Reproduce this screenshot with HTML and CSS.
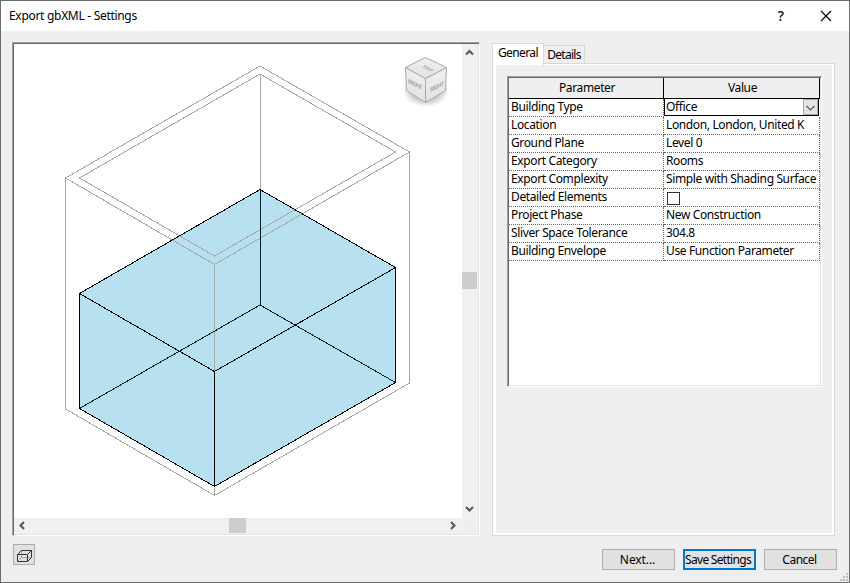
FILE: index.html
```
<!DOCTYPE html>
<html lang="en">
<head>
    <meta charset="UTF-8">
    <title>Export gbXML - Settings</title>
    <link rel="stylesheet" href="styles.css">
</head>
<body>
    <div class="window">
        <header class="titlebar">
            <span class="title">Export gbXML - Settings</span>
            <span class="help">?</span>
            <svg class="close" width="12" height="12" viewBox="0 0 12 12"><path d="M1 1L11 11M11 1L1 11" stroke="#000" stroke-width="1.100" fill="none"/></svg>
        </header>

        <main class="content">
            <section class="viewport">
                <svg class="model" width="448" height="474" viewBox="14 44 448 474">
                    <defs>
                        <linearGradient id="face" x1="0" y1="0" x2="0" y2="1">
                            <stop offset="0" stop-color="#f0f0f0"/>
                            <stop offset="1" stop-color="#e2e2e2"/>
                        </linearGradient>
                        <radialGradient id="shadow">
                            <stop offset="0.5" stop-color="#bbb"/>
                            <stop offset="1" stop-color="#fff"/>
                        </radialGradient>
                    </defs>
                    <!-- room volume -->
                    <path d="M260.500 189.500L395.500 267.500V382.500L214.500 486.500L79.500 408.500V293.500Z" fill="#b7e1f1"/>
                    <g class="walls">
                        <path d="M260 66L409.500 152L214.500 264.500L65.500 178Z"/>
                        <path d="M260 74L395.500 152L214.500 256L79.500 178Z"/>
                        <path d="M65.500 178V409L214.500 495.500L409.500 383V152M260.500 74V189M214.500 264V371M214.500 487V495"/>
                    </g>
                    <path class="back-edges" d="M260.500 189V305M79.500 408.500L260 305L395.500 382.500"/>
                    <g class="edges">
                        <path d="M260 189.500L395.500 267.500L214.500 371.500L79.500 293.500Z"/>
                        <path d="M79.500 293V408.500L214.500 486.500L395.500 382.500V267M214.500 371V487"/>
                    </g>
                    <!-- view cube -->
                    <ellipse cx="426" cy="91" rx="23" ry="16" fill="url(#shadow)"/>
                    <g fill="url(#face)" stroke="#a9a9a9" stroke-width="1">
                        <path d="M405.500 67.500L425.500 78.500V102.500L406.500 90.500Z"/>
                        <path d="M446.500 67.500L425.500 78.500V102.500L445.500 90.500Z"/>
                        <path d="M425.500 57.500L446.500 67.500L425.500 78.500L405.500 67.500Z"/>
                    </g>
                    <g class="cube-label">
                        <text transform="matrix(.88 .42 0 1 408 83)" textLength="16">FRONT</text>
                        <text transform="matrix(.88 -.42 0 1 430 92)" textLength="16">RIGHT</text>
                        <text transform="matrix(.8 .4 -.8 .4 421 67)">TOP</text>
                    </g>
                </svg>
                <div class="scroll-v">
                    <svg width="16" height="16" viewBox="0 0 16 16"><path d="M4 10.500L7.500 7L11 10.500"/></svg>
                    <div class="thumb"></div>
                    <svg width="16" height="16" viewBox="0 0 16 16"><path d="M4 5L7.500 8.500L11 5"/></svg>
                </div>
                <div class="scroll-h">
                    <svg width="16" height="16" viewBox="0 0 16 16"><path d="M10 4L6.500 7.500L10 11"/></svg>
                    <div class="thumb"></div>
                    <svg width="16" height="16" viewBox="0 0 16 16"><path d="M5 4L8.500 7.500L5 11"/></svg>
                </div>
                <div class="corner"></div>
            </section>

            <section class="settings">
                <div class="tabs">
                    <div class="tab active">General</div>
                    <div class="tab">Details</div>
                </div>
                <div class="panel">
                    <div class="grid">
                        <div class="row head"><div>Parameter</div><div>Value</div></div>
                        <div class="row">
                            <div>Building Type</div>
                            <div class="combo">
                                <span>Office</span>
                                <span class="drop"><svg width="13" height="14" viewBox="0 0 13 14"><path d="M2.500 6L6.500 10L10.500 6" stroke="#555" stroke-width="1.200" fill="none"/></svg></span>
                            </div>
                        </div>
                        <div class="row"><div>Location</div><div>London, London, United K</div></div>
                        <div class="row"><div>Ground Plane</div><div>Level 0</div></div>
                        <div class="row"><div>Export Category</div><div>Rooms</div></div>
                        <div class="row"><div>Export Complexity</div><div>Simple with Shading Surface</div></div>
                        <div class="row"><div>Detailed Elements</div><div><span class="check"></span></div></div>
                        <div class="row"><div>Project Phase</div><div>New Construction</div></div>
                        <div class="row"><div>Sliver Space Tolerance</div><div>304.8</div></div>
                        <div class="row"><div>Building Envelope</div><div>Use Function Parameter</div></div>
                    </div>
                </div>
            </section>
        </main>

        <footer class="footer">
            <div class="icon-btn">
                <svg width="20" height="19" viewBox="0 0 20 19" fill="none">
                    <path d="M7.500 5V12.500H18M7.500 12.500L4 16" stroke="#aaa"/>
                    <path d="M3.500 9.500H13.500V16.500H3.500ZM3.500 9.500L7.500 5.500H17.500L13.500 9.500M17.500 5.500V12.500L13.500 16.500" stroke="#333338"/>
                </svg>
            </div>
            <div class="btn next">Next...</div>
            <div class="btn default">Save Settings</div>
            <div class="btn">Cancel</div>
        </footer>
        <svg class="grip" width="8" height="8" viewBox="0 0 8 8"><path d="M6 0h2v2h-2zM3 3h2v2h-2zM6 3h2v2h-2zM0 6h2v2h-2zM3 6h2v2h-2zM6 6h2v2h-2z" fill="#bfbfbf"/></svg>
    </div>
</body>
</html>
```
FILE: styles.css
```
* {
    box-sizing: border-box;
}
body {
    margin: 0;
    font-family: "Noto Sans", "Open Sans", sans-serif;
    font-size: 12px;
    color: #000;
}
svg {
    display: block;
}
.window {
    position: relative;
    width: 850px;
    height: 583px;
    border: 1px solid #6b6b6b;
    background: #efefef;
    overflow: hidden;
}
.titlebar {
    display: flex;
    align-items: center;
    height: 30px;
    padding: 0 17px 0 8px;
    background: #fff;
}
.title {
    flex: 1;
    padding-bottom: 1px;
    letter-spacing: -0.3px;
}
.help {
    margin-right: 36px;
    padding-bottom: 2px;
    font-size: 14px;
    font-weight: 500;
}
.content {
    display: flex;
    gap: 12px;
    padding: 11px 14px 0 11px;
}

/* model view */
.viewport {
    display: grid;
    grid-template-columns: 448px 16px;
    grid-template-rows: 474px 16px;
    width: 468px;
    height: 494px;
    padding: 1px;
    border: 1px solid;
    border-color: #a0a0a0 #fff #fff #a0a0a0;
    box-shadow: inset 1px 1px #696969, inset -1px -1px #e3e3e3;
}
.model {
    background: #fff;
}
.walls path,
.edges path,
.back-edges {
    fill: none;
    shape-rendering: crispEdges;
}
.walls {
    stroke: #a9a9a9;
}
.edges {
    stroke: #000;
}
.back-edges {
    stroke: #00202c;
}
.cube-label {
    font-size: 6px;
    font-weight: bold;
    fill: #a8a8a8;
}
.scroll-v,
.scroll-h {
    display: flex;
    justify-content: space-between;
    background: #f0f0f0;
}
.scroll-v {
    flex-direction: column;
}
.scroll-v path,
.scroll-h path {
    fill: none;
    stroke: #555;
    stroke-width: 2;
}
.thumb {
    background: #cdcdcd;
}
.scroll-v .thumb {
    width: 15px;
    height: 17px;
    margin-bottom: 2px;
}
.scroll-h .thumb {
    width: 17px;
    height: 15px;
    margin-right: 2px;
}

/* tabs */
.settings {
    width: 343px;
    padding-top: 1px;
}
.tabs {
    display: flex;
    align-items: flex-end;
    height: 20px;
}
.tab {
    width: 41px;
    height: 18px;
    border: 1px solid #d9d9d9;
    border-left: 0;
    border-bottom: 0;
    text-align: center;
    line-height: 18px;
    letter-spacing: -0.75px;
}
.tab.active {
    position: relative;
    z-index: 1;
    width: 52px;
    height: 22px;
    margin-bottom: -2px;
    border-left: 1px solid #d9d9d9;
    background: #fff;
    letter-spacing: -0.6px;
}
.panel {
    height: 473px;
    padding: 12px 11px 0 14px;
    border: 1px solid #d9d9d9;
    box-shadow: inset 3px 1px #fff, inset -2px -2px #fff;
}
.grid {
    width: 315px;
    height: 311px;
    padding: 1px;
    border: 1px solid;
    border-color: #a0a0a0 #fff #fff #a0a0a0;
    box-shadow: inset 1px 1px #696969, inset -1px -1px #e3e3e3;
    background: #fff;
    letter-spacing: -0.37px;
}
.row {
    display: grid;
    grid-template-columns: 155px 156px;
    height: 18px;
    line-height: 16px;
}
.row > div {
    padding-left: 2px;
    border-right: 1px dotted #666;
    border-bottom: 1px dotted #666;
    white-space: nowrap;
}
.row.head {
    height: 21px;
    line-height: 20px;
    text-align: center;
}
.row.head > div {
    border-right: 1px solid #000;
    border-bottom: 1px solid #000;
    background: #efefef;
}
.row > .combo {
    display: flex;
    justify-content: space-between;
    height: 17px;
    margin-right: 1px;
    border: 1px solid #000;
    border-top: 0;
    border-left: 0;
    box-shadow: inset 1px 0 #000;
}
.drop {
    width: 15px;
    height: 16px;
    border: 1px solid #a9a9a9;
    background: #e4e4e4;
}
.check {
    display: block;
    width: 13px;
    height: 13px;
    margin: 3px 0 0 1px;
    border: 1px solid #333;
}

/* buttons */
.footer {
    display: flex;
    gap: 8px;
    padding: 8px 12px 0;
}
.icon-btn {
    width: 22px;
    height: 21px;
    border: 1px solid #adadad;
    background: #e1e1e1;
}
.btn {
    width: 73px;
    height: 21px;
    margin-top: 5px;
    padding-right: 2px;
    border: 1px solid #adadad;
    background: #e1e1e1;
    line-height: 20px;
    text-align: center;
    white-space: nowrap;
    letter-spacing: -0.5px;
}
.btn.next {
    margin-left: auto;
    letter-spacing: -0.1px;
}
.btn.default {
    padding-right: 3px;
    border: 2px solid #0078d7;
    line-height: 18px;
    letter-spacing: -0.7px;
}
.grip {
    position: absolute;
    right: 1px;
    bottom: 1px;
}
```
